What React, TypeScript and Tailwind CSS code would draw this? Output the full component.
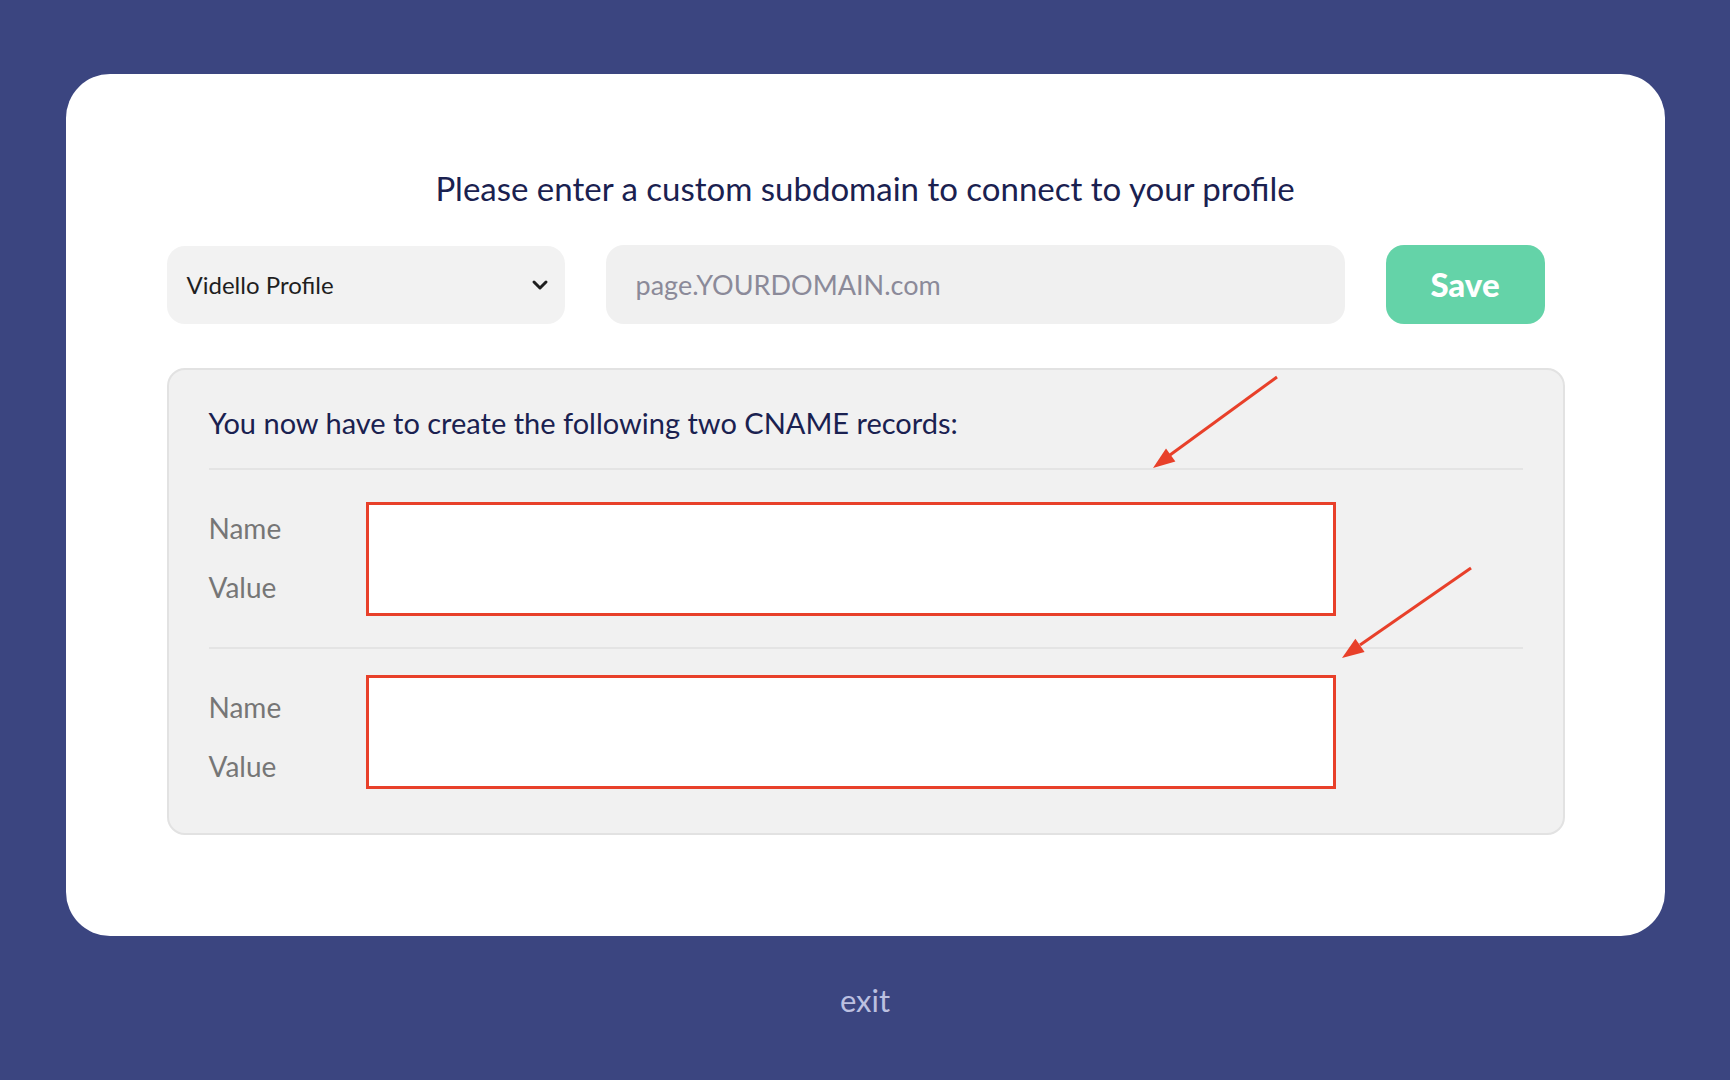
import { ChevronDown } from "lucide-react";

const font = { fontFamily: "Lato, 'Open Sans', sans-serif" };

const RecordRow = ({ second }: { second?: boolean }) => {
    return (
        <div className="flex items-start">
            <div
                className={`w-[157px] flex flex-col gap-[25px] text-[28px] leading-[34px] text-[#767676] ${second ? "pt-[15px]" : "pt-[9px]"
                    }`}
            >
                <span>Name</span>
                <span>Value</span>
            </div>
            <div className="w-[970px] h-[114px] bg-white border-[3px] border-[#e8402a]" />
        </div>
    );
};

const App = () => {
    return (
        <div
            className="min-h-screen bg-[#3b4580] flex flex-col items-center pt-[74px]"
            style={font}
        >
            <div className="w-[1599px] h-[862px] bg-white rounded-[44px] px-[101px] pt-[94px]">
                <h1 className="text-center text-[33px] leading-[40px] text-[#1a2150]">
                    Please enter a custom subdomain to connect to your profile
                </h1>

                <div className="flex items-center gap-[41px] mt-[37px]">
                    <button className="w-[398px] h-[78px] rounded-[18px] bg-[#f2f2f2] flex items-center justify-between pl-[20px] pr-[13px] text-[24px] text-[#1f1f1f]">
                        <span>Vidello Profile</span>
                        <ChevronDown size={24} strokeWidth={3} />
                    </button>
                    <input
                        className="w-[739px] h-[79px] rounded-[18px] bg-[#f0f0f0] px-[30px] text-[27px] outline-none placeholder:text-[#8b8a99]"
                        placeholder="page.YOURDOMAIN.com"
                    />
                    <button className="w-[159px] h-[79px] rounded-[18px] bg-[#64d3a8] text-white font-black text-[33px]">
                        Save
                    </button>
                </div>

                <div className="relative mt-[44px] w-[1398px] h-[467px] bg-[#f1f1f1] border-2 border-[#e2e2e2] rounded-[18px] px-[40px] pt-[35px]">
                    <p className="text-[29px] leading-[36px] text-[#1a2150]">
                        You now have to create the following two CNAME records:
                    </p>
                    <div className="mt-[27px] border-t-2 border-[#e4e4e4] pt-[32px] pb-[31px]">
                        <RecordRow />
                    </div>
                    <div className="border-t-2 border-[#e4e4e4] pt-[26px]">
                        <RecordRow second />
                    </div>

                    <svg
                        className="absolute left-[-2px] top-[-2px] pointer-events-none"
                        width="1398"
                        height="467"
                    >
                        <line x1="1110" y1="9" x2="1003" y2="87" stroke="#e8402a" strokeWidth="3" />
                        <polygon points="986,100 1008.4,93.4 999,80.6" fill="#e8402a" />
                        <line x1="1304" y1="200" x2="1193" y2="277" stroke="#e8402a" strokeWidth="3" />
                        <polygon points="1175,290 1197.6,284 1188.4,270.8" fill="#e8402a" />
                    </svg>
                </div>
            </div>

            <a className="mt-[47px] text-[31px] leading-[34px] text-[#bcc0e0]">exit</a>
        </div>
    );
};

export default App;
